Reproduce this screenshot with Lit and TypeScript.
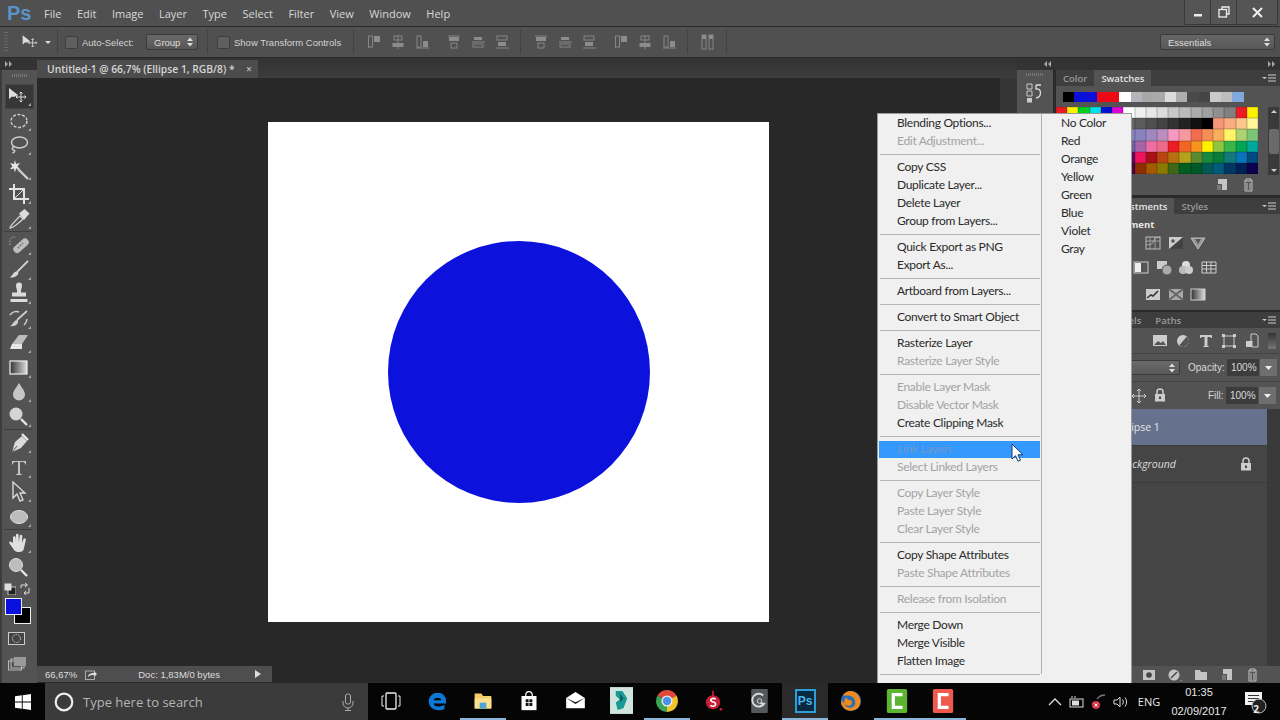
import { LitElement, html, css, svg } from "lit";
import { customElement } from "lit/decorators.js";

const G = "#cfcfcf";
const icon = (w: number, h: number, vb: string, body: unknown, cls = "") =>
  html`<svg class=${cls} width=${w} height=${h} viewBox=${vb} fill="none">${body}</svg>`;

const tri = svg`<path d="M24 19v3h-3z" fill="#a8a8a8"/>`;
const toolBodies: [string, unknown][] = [
  ["move", svg`<path d="M2 4v11l3-2.600 2 .6 4-2z" fill="#ddd"/><path d="M14 8v10M9 13h10M12.500 9.500 14 8l1.500 1.500M12.500 16.500 14 18l1.500-1.500M10.500 11.500 9 13l1.500 1.500M17.500 11.500 19 13l-1.500 1.500" stroke="#ddd"/>`],
  ["marquee", svg`<ellipse cx="12" cy="12" rx="8" ry="6.500" stroke="${G}" stroke-width="1.400" stroke-dasharray="3 1.600"/>`],
  ["lasso", svg`<ellipse cx="12.500" cy="9.500" rx="8" ry="5.500" stroke="${G}" stroke-width="1.400"/><path d="M7 13.500c-2 1-2.500 3-.5 3.500s1.500 2-1 3" stroke="${G}" stroke-width="1.400"/>`],
  ["wand", svg`<path d="M11 11 21 21" stroke="${G}" stroke-width="2.400"/><path d="M8 2l1 4 4-1-2.500 3.200L13 11.500l-4-1-1 4-1.200-4-4 1L5.500 8.200 3 5l4 1z" fill="#e6e6e6"/>`],
  ["crop", svg`<path d="M7 2v15h15M2 7h15v15" stroke="#e2e2e2" stroke-width="2"/><path d="M7 17 17 7" stroke="#e2e2e2"/>`],
  ["dropper", svg`<path d="M3 21c0-2 9-11 10-12l3 3C15 13 6 21.500 3 21z" stroke="${G}" stroke-width="1.300"/><path d="M12 6.500 17.500 2l5 4.500-5.500 6.500z" fill="#dcdcdc"/>`],
  ["heal", svg`<rect x="5" y="9" width="18" height="7.500" rx="3.700" transform="rotate(-42 14 12.700)" fill="#bdbdbd"/><path d="M3 12V7l2-3h4" stroke="#aaa" stroke-dasharray="1.500 1.500"/><path d="M11 15l5-5" stroke="#777" stroke-dasharray="1.500 1.500" stroke-width="2"/>`],
  ["brush", svg`<path d="M10 14 21 3" stroke="${G}" stroke-width="1.800"/><path d="M11 13.500c1.500 3-2 6.500-8.500 6 3-1 3.500-7 8.500-6z" fill="#d8d8d8"/>`],
  ["stamp", svg`<path d="M9 3.500a3 3 0 0 1 6 0c0 3-1.500 4-1 7h5v4H5v-4h5c.5-3-1-4-1-7zM3.500 17h17v3h-17z" fill="#dcdcdc"/>`],
  ["history", svg`<path d="M10 13 20 4" stroke="${G}" stroke-width="1.700"/><path d="M11 13c1 4-3 7-8 6 3-1 3-6 8-6z" fill="#cfcfcf"/><path d="M3 8c3-4 7-4 9-3M20 12c0 2-1 4-3 6" stroke="${G}" stroke-width="1.500"/>`],
  ["eraser", svg`<path d="M12 4h9l-6 9H5z" fill="#bdbdbd"/><path d="M5 13h10v5H3z" fill="#e6e6e6"/>`],
  ["gradient", svg`<rect x="3" y="5" width="17" height="13" fill="url(#tg)" stroke="#eee" stroke-width="1.200"/>`],
  ["drop", svg`<path d="M12 3c3 5 6 8 6 11.500a6 6 0 0 1-12 0C6 11 9 8 12 3z" fill="#c6c6c6"/>`],
  ["dodge", svg`<circle cx="9" cy="9" r="6.500" fill="#d4d4d4"/><path d="M14 14l6 6" stroke="#e6e6e6" stroke-width="2.400"/>`],
  ["pen", svg`<path d="M5 21l3-10 7-6 5 5-6 7z" fill="#dadada"/><path d="M15 3l6 6" stroke="#eee" stroke-width="2.200"/><path d="M5 21l5-6" stroke="#555"/>`],
  ["type", svg`<path d="M5 5h14v3.500h-.8C18 7 17.300 6 15.500 6H13v11.500l1.800.7v.8H9.200v-.8l1.800-.7V6H8.500C6.700 6 6 7 5.800 8.500H5z" fill="#c4c4c4"/>`],
  ["path", svg`<path d="M6 2v16l4-4 3 7 3-1.200-3-6.800h5z" stroke="#d8d8d8" stroke-width="1.400"/>`],
  ["ellipse", svg`<ellipse cx="12" cy="12" rx="8.500" ry="6.500" fill="#bcbcbc" stroke="#ddd"/>`],
  ["hand", svg`<path d="M6 12V6.500a1.300 1.300 0 0 1 2.600 0V11l.4-7a1.300 1.300 0 0 1 2.600 0l.2 7 1-6.500a1.300 1.300 0 0 1 2.500.4L15 12l1.500-4a1.300 1.300 0 0 1 2.400.8L17 17c-.5 3-2 4-5 4-4 0-5-2-7-5l-2.500-3.500c-1-1.500 1-2.500 2-1.500z" fill="#e0e0e0"/>`],
  ["zoom", svg`<circle cx="9" cy="9" r="6.500" fill="#bdbdbd" stroke="#ddd"/><path d="M14 14l6 6" stroke="#e6e6e6" stroke-width="2.400"/>`],
];

const toolGroups = [toolBodies.slice(0, 6), toolBodies.slice(6, 14), toolBodies.slice(14, 18), toolBodies.slice(18)];

const topSwatches = ["#000", "#0a10d8", "#0a10d8", "#ee0a14", "#ee0a14", "#fff", "#b4b4bc", "#a8a8a8", "#aaa", "#dcdcdc", "#aeaeae", "#4a4a4a", "#454545", "#cacaca", "#bebebe", "#80a8dc"];
const swatchRows = [
  ["#e81c24", "#fff200", "#00d020", "#00e0e8", "#0010d0", "#e000d8", "#fff", "#f0f0f0", "#e6e6e6", "#dcdcdc", "#c8c8c8", "#bababa", "#acacac", "#a0a0a0", "#909090", "#808080", "#ed1c24", "#fff200"],
  ["#aaa", "#999", "#888", "#777", "#666", "#666", "#666", "#5c5c5c", "#505050", "#444", "#333", "#222", "#111", "#000", "#f7977a", "#f9ad81", "#fdc68a", "#fff79a"],
  ["#7bcdc8", "#6ecff6", "#7ea7d8", "#8493ca", "#8882be", "#8882be", "#8882be", "#8882be", "#a187be", "#bc8dbf", "#f49ac2", "#f6989d", "#f26c4f", "#f68e55", "#fbaf5c", "#fff467", "#acd372", "#7cc576"],
  ["#1cbbb4", "#00bff3", "#438ccb", "#5574b9", "#5674b9", "#5c6bb5", "#6d5fa8", "#a763a8", "#ee6ea4", "#ed6b88", "#ed1c24", "#f26522", "#f7941d", "#fff200", "#8dc63f", "#39b54a", "#00a651", "#00a99d"],
  ["#00746b", "#0076a3", "#0054a6", "#003471", "#1b1464", "#440e62", "#630460", "#ed145b", "#aa1018", "#b8470f", "#b97010", "#b5a11c", "#5d8a2f", "#198a3c", "#0a7c3a", "#127a7a", "#0a74bb", "#004a80"],
  ["#005952", "#005b7f", "#003663", "#002157", "#0d004c", "#32004b", "#4b0049", "#8e2f02", "#a35a00", "#8a7a00", "#406618", "#005e20", "#005826", "#005952", "#005b7f", "#003663", "#002157", "#0d004c"],
];

type MI = string | [string, string] | null;
const menu: MI[] = [
  "Blending Options...", ["Edit Adjustment...", "d"], null,
  "Copy CSS", "Duplicate Layer...", "Delete Layer", "Group from Layers...", null,
  "Quick Export as PNG", "Export As...", null,
  "Artboard from Layers...", null,
  "Convert to Smart Object", null,
  "Rasterize Layer", ["Rasterize Layer Style", "d"], null,
  ["Enable Layer Mask", "d"], ["Disable Vector Mask", "d"], "Create Clipping Mask", null,
  ["Link Layers", "hl"], ["Select Linked Layers", "d"], null,
  ["Copy Layer Style", "d"], ["Paste Layer Style", "d"], ["Clear Layer Style", "d"], null,
  "Copy Shape Attributes", ["Paste Shape Attributes", "d"], null,
  ["Release from Isolation", "d"], null,
  "Merge Down", "Merge Visible", "Flatten Image", null,
];
const labels = ["No Color", "Red", "Orange", "Yellow", "Green", "Blue", "Violet", "Gray"];
const menus = ["File", "Edit", "Image", "Layer", "Type", "Select", "Filter", "View", "Window", "Help"];

const S = "#858585";
const F = "#8c8c8c";
const alignBodies: unknown[] = [
  svg`<path d="M1.500 2v12" stroke="${S}"/><rect x="1.500" y="2" width="4" height="11" stroke="${S}"/><rect x="7" y="2" width="6" height="6" fill="${F}"/>`,
  svg`<path d="M7 1v14" stroke="${S}"/><rect x="3" y="2" width="8" height="4" stroke="${S}"/><rect x="1.500" y="9" width="11" height="4" fill="${F}"/>`,
  svg`<path d="M1 14h13" stroke="${S}"/><rect x="2" y="2" width="4" height="11" stroke="${S}"/><rect x="8" y="7" width="5" height="6" fill="${F}"/>`,
];
const alignV: unknown[] = [
  svg`<path d="M1 2h12" stroke="${S}"/><rect x="2" y="3" width="10" height="4" fill="${F}"/><rect x="4" y="9" width="6" height="5" stroke="${S}"/>`,
  svg`<path d="M1 8h13" stroke="${S}"/><rect x="3" y="3" width="8" height="3" fill="${F}"/><rect x="2" y="10" width="10" height="3" stroke="${S}"/>`,
  svg`<path d="M1 14h13" stroke="${S}"/><rect x="2" y="2" width="10" height="4" stroke="${S}"/><rect x="3" y="8" width="8" height="4" fill="${F}"/>`,
];

const adj1 = [
  svg`<rect x="1" y="1" width="14" height="12" stroke="#bbb"/><path d="M1 9l6-1 3-6 5-1M5 1v12M10 1v12M1 5h14" stroke="#bbb" stroke-width=".7"/>`,
  svg`<path d="M1 1h14v12H1z" fill="#ccc"/><path d="M15 1v12H1z" fill="#444"/><path d="M3 5h4M5 3v4M10 10h4" stroke="#333"/>`,
  svg`<path d="M1 2h14l-7 11z" fill="#999" stroke="#bbb"/><path d="M5 3h6l-3 5z" fill="#555"/>`,
];
const adj2 = [
  svg`<rect x="1" y="2" width="14" height="11" fill="#555" stroke="#ccc"/><rect x="2" y="3" width="6" height="9" fill="#eee"/>`,
  svg`<rect x="1" y="1" width="10" height="8" fill="#ccc"/><circle cx="11" cy="10" r="5" fill="#aaa" stroke="#555"/>`,
  svg`<circle cx="8" cy="5" r="4" fill="#ddd"/><circle cx="5" cy="10" r="4" fill="#bbb"/><circle cx="11" cy="10" r="4" fill="#ccc"/>`,
  svg`<path d="M1 2h14v11H1zM1 5.500h14M1 9h14M5.500 2v11M10 2v11" stroke="#ccc"/>`,
];
const adj3 = [
  svg`<rect x="1" y="2" width="14" height="11" fill="#ccc"/><path d="M2 11l4-3 2 1 5-5" stroke="#333" stroke-width="1.500"/>`,
  svg`<rect x="1" y="2" width="14" height="11" fill="#aaa"/><path d="M1 2l14 11M15 2 1 13" stroke="#666" stroke-width="2"/>`,
  svg`<rect x="1" y="2" width="14" height="11" fill="url(#tg)" stroke="#ccc"/>`,
];
const layerIcons = [
  svg`<rect x="1" y="2" width="14" height="11" fill="#ccc"/><path d="M2 12l4-4 3 2 2-2 3 4z" fill="#555"/>`,
  svg`<circle cx="8" cy="8" r="6" fill="#ccc"/><path d="M8 2a6 6 0 0 1 0 12z" fill="#555" transform="rotate(40 8 8)"/>`,
  svg`<path d="M2 2h12v3h-1l-1-1H9.500v9l1.500.5v.5H5v-.5l1.500-.5V4H4L3 5H2z" fill="#ccc"/>`,
  svg`<path d="M3 3h10v10H3z" stroke="#ccc"/><path d="M1 1h3v3H1zM12 1h3v3h-3zM1 12h3v3H1zM12 12h3v3h-3z" fill="#ccc"/>`,
  svg`<path d="M7 1h5l2 2v11H8V8H7z" stroke="#ccc"/><rect x="2" y="8" width="6" height="6" fill="#ccc"/>`,
];

const bottomIcons = [
  svg`<rect x="2" y="3" width="12" height="10" fill="#c4c4c4"/><circle cx="8" cy="8" r="2.800" fill="#444"/>`,
  svg`<circle cx="7" cy="8" r="5.500" fill="#c4c4c4"/><path d="M4 11l6-6" stroke="#444" stroke-width="1.500"/><path d="M13 13h2l-1 1z" fill="#bbb"/>`,
  svg`<path d="M2 3h5l1 2h6v8H2z" fill="#c4c4c4"/>`,
  svg`<path d="M4 2h9v11H8V7H4z" fill="#c4c4c4"/><path d="M3 8h4v5H3z" fill="#777"/>`,
  svg`<path d="M5 4V2h5v2M3 4h9M4 5v9h7V5M6 6v7M9 6v7" stroke="#c4c4c4"/>`,
];
const lockI = (c: string) => icon(12, 14, "0 0 12 14", svg`<path d="M3 6V4a3 3 0 0 1 6 0v2" stroke="${c}" stroke-width="1.500"/><rect x="1" y="6" width="10" height="7.500" fill="${c}"/><rect x="5" y="8.500" width="2" height="2.500" fill="#444"/>`);
const panelMenu = icon(14, 8, "0 0 14 8", svg`<path d="M0 3l2.500 2L5 3z" fill="#ccc"/><path d="M6 1h8M6 4h8M6 7h8" stroke="#ccc"/>`, "pm");
const arrows = icon(6, 10, "0 0 6 10", svg`<path d="M0 4l3-3.500L6 4zM0 6l3 3.500L6 6z" fill="#ddd"/>`);

const taskApps: [unknown, string?][] = [
  [icon(22, 22, "0 0 22 22", svg`<rect x="6" y="3" width="10" height="16" rx="1" stroke="#eee" stroke-width="1.300"/><path d="M4 6H2v10h2M18 6h2v10h-2" stroke="#eee"/>`)],
  [icon(20, 22, "0 0 24 24", svg`<path d="M2 13C2 6 7 2 13 2c6 0 10 4 10 11v2H8c.5 4 7 5 13 1.500v5C14 25 3 23 2 13zm6-2h9c-.3-3.500-7.500-4-9 0z" fill="#0a78d4"/>`)],
  [icon(20, 20, "0 0 24 24", svg`<path d="M2 3h8l2 3h10v15H2z" fill="#f5cf6b"/><path d="M2 9h20v12H2z" fill="#fbe08e"/><path d="M8 14h8v7H8z" fill="#4aa6d8"/>`), "on"],
  [icon(20, 22, "0 0 24 26", svg`<path d="M3 7h18v17H3z" fill="#fff"/><path d="M8 7c0-7 8-7 8 0" stroke="#fff" stroke-width="1.500"/><path d="M8 11h3.500v3.500H8zM12.500 11H16v3.500h-3.500zM8 15.500h3.500V19H8zM12.500 15.500H16V19h-3.500z" fill="#111"/>`)],
  [icon(23, 17, "0 0 24 20", svg`<path d="M1 7 12 0l11 7v12H1z" fill="#fff"/><path d="M1 7l11 7 11-7-11 5z" fill="#111"/>`)],
  [icon(23, 27, "0 0 24 28", svg`<rect width="24" height="28" fill="#cfe6e0"/><path d="M6 4h7l5 8-4 10-6 2-2-8 4-3-4-4z" fill="#1b9a94"/><path d="M10 6l4 6-3 4z" fill="#0d5d5a"/>`)],
  [icon(22, 22, "0 0 22 22", svg`<path d="M11 11 1.500 5.500A11 11 0 0 1 20.500 5.500z" fill="#e04a3c"/><path d="M11 11 20.500 5.500A11 11 0 0 1 11 22z" fill="#f2c22d"/><path d="M11 11V22A11 11 0 0 1 1.500 5.500z" fill="#3aa655"/><circle cx="11" cy="11" r="5.500" fill="#eee"/><circle cx="11" cy="11" r="4.200" fill="#4b8fe8"/>`), "on"],
  [icon(20, 23, "0 0 22 26", svg`<circle cx="11" cy="15" r="8" fill="#c81e36"/><path d="M11 2v6" stroke="#c81e36" stroke-width="2"/><path d="M14 11.500c-2-1.500-6-1-5.500 1.500s5.500 1 5.500 4-4 3-6 1.500" stroke="#fff" stroke-width="1.800"/><circle cx="20" cy="23" r="1.500" fill="#c81e36"/>`)],
  [icon(17, 24, "0 0 18 26", svg`<rect width="18" height="26" rx="1" fill="#55595c"/><path d="M13 7a7 7 0 1 0 1 9l-4-.5" stroke="#ddd" stroke-width="2"/><circle cx="9" cy="13" r="2.500" stroke="#ddd"/>`)],
  [html`<span class="psapp">Ps</span>`, "on active"],
  [icon(22, 22, "0 0 24 24", svg`<circle cx="12" cy="12" r="11" fill="#2a6fb8"/><path d="M3 6c4-6 10-6 14-3 6 4 7 13 2 17-5 4-13 4-17-3-1-2-1-5 0-7 0 3 2 4 3 4-1-3 1-5 3-6-1 2 0 3 2 3 3 0 4 3 2 5-2 2-6 1-7-1 1 4 6 6 10 3 3-3 2-8-2-11-2-1-4-1-6-1z" fill="#f08a1d"/>`)],
  [icon(22, 24, "0 0 22 26", svg`<rect width="22" height="26" rx="2" fill="#5cb531"/><path d="M17 6H7v14h10" stroke="#fff" stroke-width="3.500"/>`), "on"],
  [icon(22, 24, "0 0 22 26", svg`<rect width="22" height="26" rx="2" fill="#ee5a4d"/><path d="M17 6H7v14h10" stroke="#fff" stroke-width="3.500"/>`), "on"],
];

@customElement("app-root")
export class AppRoot extends LitElement {
  static styles = css`
    :host { display: block; width: 1280px; height: 720px; position: relative; overflow: hidden; background: #000;
      font: 9.500px "Liberation Sans", "Noto Sans", sans-serif; color: #d4d4d4; }
    .defs { position: absolute; }
    .app { display: flex; flex-direction: column; height: 720px; }
    .menubar { height: 27px; flex: none; display: flex; align-items: center; background: #505050; border-bottom: 1px solid #2c2c2c; box-sizing: border-box; position: relative; }
    .logo { font: bold 20px "Liberation Sans", sans-serif; color: #5b93c9; margin-left: 7px; width: 37px; }
    .menus { display: flex; gap: 15.500px; font: 11px "Open Sans", sans-serif; color: #d8d8d8; }
    .winctl { position: absolute; right: 2px; top: 0; height: 25px; width: 94px; display: flex; background: #555; border: 1px solid #3a3a3a; border-top: 0; box-sizing: border-box; border-radius: 0 0 2px 2px; }
    .winctl span { display: flex; align-items: center; justify-content: center; border-right: 1px solid #3a3a3a; }
    .winctl span:nth-child(1), .winctl span:nth-child(2) { width: 25px; }
    .winctl span:nth-child(3) { flex: 1; border: 0; }
    .options { height: 31px; flex: none; display: flex; align-items: center; background: #505050; border-bottom: 1px solid #2a2a2a; box-sizing: border-box; }
    .grip { width: 4px; height: 20px; margin-left: 4px; background: repeating-linear-gradient(#6a6a6a 0 1px, transparent 1px 3px); }
    .mv { margin-left: 13px; }
    .caret { width: 0; height: 0; border: 3px solid transparent; border-top: 3px solid #ddd; margin: 3px 0 0 4px; }
    .osep { width: 1px; height: 24px; background: #424242; }
    .s1 { margin-left: 6px; }
    .cb { width: 13px; height: 13px; background: #5f5f5f; border: 1px solid #3e3e3e; box-sizing: border-box; border-radius: 1px; }
    .c1 { margin-left: 7px; } .l1 { margin-left: 4px; width: 64px; white-space: nowrap; }
    .select { width: 52px; height: 16px; box-sizing: border-box; display: flex; align-items: center; justify-content: space-between; padding: 0 4px 0 7px; background: linear-gradient(#6a6a6a, #565656); border: 1px solid #3a3a3a; border-radius: 2px; color: #ddd; }
    .s2 { margin-left: 9px; } .c2 { margin-left: 9px; } .l2 { margin-left: 4px; width: 119px; white-space: nowrap; }
    .aligns { margin-left: 13px; display: flex; align-items: center; }
    .ag { display: flex; gap: 10px; }
    .ag + .ag { margin-left: 18px; }
    .osep.m { margin: 0 13px 0 11px; }
    .ess { margin-left: auto; margin-right: 5px; width: 115px; height: 16px; box-sizing: border-box; display: flex; align-items: center; justify-content: space-between; padding: 0 4px 0 7px; background: linear-gradient(#666, #585858); border: 1px solid #3a3a3a; border-radius: 2px; font-size: 9.500px; color: #ddd; }

    .main { flex: 1; min-height: 0; display: flex; background: #2a2a2a; }
    .tools { width: 37px; flex: none; display: flex; flex-direction: column; background: #535353; border-left: 2px solid #3c3c3c; box-sizing: border-box; margin-left: 0; }
    .strip { height: 12px; background: #333; flex: none; display: flex; align-items: center; box-sizing: border-box; }
    .tools .strip { margin-left: -2px; padding-left: 5px; }
    .rule { height: 3px; margin: 4px 10px 7px; background: repeating-linear-gradient(90deg, #777 0 1px, transparent 1px 2px); flex: none; }
    .tool { height: 24.500px; flex: none; display: flex; align-items: center; justify-content: center; margin-left: -2px; }
    .tool.sel { background: #373737; margin: 0 3px 0 3px; height: 22px; padding: 1.250px 0; border-radius: 2px; box-shadow: inset 0 0 0 1px #444; }
    .tool.sel svg { margin-left: -2px; }
    .tsep { height: 1px; margin: 0 4px 1px 2px; background: #3e3e3e; flex: none; }
    .swaps { height: 17px; display: flex; justify-content: space-between; align-items: center; padding: 0 6px 0 2px; flex: none; }
    .colors { display: grid; margin: 1px 0 0 3px; flex: none; }
    .fg, .bg { grid-area: 1 / 1; width: 17px; height: 17px; box-sizing: border-box; border: 1px solid #eee; }
    .fg { background: #0a10e0; z-index: 1; }
    .bg { background: #000; margin: 9px 0 0 9px; }
    .mask { margin: 8px 0 0 6px; flex: none; }
    .screen { margin: 9px 0 0 6px; flex: none; }

    .doc { flex: 1; min-width: 0; display: flex; flex-direction: column; background: #282828; }
    .tabbar { height: 20px; flex: none; padding-top: 2px; box-sizing: border-box; background: linear-gradient(#333, #3c3c3c); display: flex; }
    .tab { width: 221px; box-sizing: border-box; background: #4c4c4c; display: flex; align-items: center; justify-content: space-between; padding: 0 6px 0 10px; color: #d6d6d6; white-space: nowrap; font: 600 10.300px "Open Sans", sans-serif; }
    .tab i { font-style: normal; color: #bbb; }
    .work { flex: 1; min-height: 0; display: flex; }
    .canvasarea { flex: 1; display: flex; align-items: center; justify-content: center; }
    .canvas { width: 501px; height: 500px; background: #fff; display: flex; align-items: center; justify-content: center; }
    .circle { width: 262px; height: 262px; border-radius: 50%; background: #0c12dc; }
    .vs { width: 17px; flex: none; background: #353535; }
    .status { height: 16px; flex: none; display: flex; margin-bottom: 1px; }
    .stbox { width: 235px; background: #4e4e4e; display: flex; align-items: center; padding-left: 8px; box-sizing: border-box; white-space: nowrap; color: #ddd; font-size: 9.500px; }
    .stbox svg { margin-left: 8px; }
    .stbox .docsz { margin-left: 41px; width: 117px; }
    .play { width: 0; height: 0; border: 4px solid transparent; border-left: 6px solid #ddd; border-right: 0; }

    .dock { width: 39px; flex: none; display: flex; flex-direction: column; background: #2a2a2a; }
    .dock .body { margin-right: 3px; background: #535353; flex: 1; display: flex; flex-direction: column; align-items: center; }
    .dock .rule { margin: 3px 9px 7px; align-self: stretch; }
    .dock .strip { justify-content: flex-end; padding-right: 4px; }
    .panels { width: 224px; flex: none; display: flex; flex-direction: column; background: #2a2a2a; }
    .panels .strip { justify-content: flex-end; padding-right: 4px; }
    .panel { background: #535353; flex: none; display: flex; flex-direction: column; }
    .p1 { height: 125px; } .p2 { height: 112px; margin-top: 3px; }
    .p3 { flex: 1; margin-top: 2px; min-height: 0; }
    .tabs { height: 16px; flex: none; display: flex; background: #3e3e3e; position: relative; font: 600 9.500px "Open Sans", sans-serif; color: #999; }
    .tabs span { padding: 0 7px; display: flex; align-items: center; }
    .tabs span.on { background: #535353; color: #e4e4e4; }
    .p3 .tabs span:first-child, .p2 .tabs span:first-child { padding: 0 3px; }
    .pm { position: absolute; right: 4px; top: 4px; }
    .tops { display: flex; margin: 6px 0 0 7px; height: 10px; flex: none; }
    .tops i { width: 11.300px; }
    .swgrid { display: flex; margin-top: 5px; flex: none; }
    .rows { width: 202px; }
    .row { display: flex; height: 11.200px; }
    .row i { flex: 1; box-shadow: inset 0 0 0 .5px rgba(0,0,0,.25); }
    .scroll { width: 11px; margin-left: 10px; height: 68px; background: #3a3a3a; display: flex; flex-direction: column; align-items: center; justify-content: space-between; padding: 3px 0; box-sizing: border-box; }
    .scroll b { width: 10px; height: 25px; background: #6a6a6a; border-radius: 2px; }
    .tinyup { width: 0; height: 0; border: 3px solid transparent; border-bottom-color: #ccc; border-top: 0; }
    .tinydn { width: 0; height: 0; border: 3px solid transparent; border-top-color: #ccc; border-bottom: 0; }
    .pfoot { flex: 1; display: flex; align-items: center; padding-left: 158px; gap: 11px; }
    .hd { color: #e6e6e6; font: 700 9.600px "Open Sans", sans-serif; padding: 4px 0 0 7px; height: 12px; white-space: nowrap; }
    .airow { display: flex; height: 25.500px; align-items: center; gap: 6.700px; flex: none; }
    .a1 { padding-left: 89px; } .a2 { padding-left: 77px; } .a3 { padding-left: 89px; }
    .filter { height: 26px; flex: none; display: flex; align-items: center; padding-left: 96px; gap: 7px; border-bottom: 1px solid #444; box-sizing: border-box; }
    .filter .toggle { width: 8px; height: 16px; margin-left: 1px; background: linear-gradient(#333, #777); }
    .blend { height: 28px; flex: none; display: flex; align-items: center; border-bottom: 1px solid #444; box-sizing: border-box; }
    .bsel { width: 124px; height: 15px; background: linear-gradient(#6a6a6a, #595959); border: 1px solid #3a3a3a; border-radius: 2px; box-sizing: border-box; display: flex; align-items: center; justify-content: flex-end; padding-right: 4px; }
    .lbl { margin-left: 8px; width: 39px; white-space: nowrap; font-size: 10px; color: #d8d8d8; }
    .num { width: 32px; height: 17px; background: #3c3c3c; display: flex; align-items: center; padding-left: 4px; box-sizing: border-box; color: #ddd; font-size: 10px; }
    .nb { width: 17px; height: 17px; background: #6e6e6e; display: flex; align-items: center; justify-content: center; margin-left: 1px; }
    .lock { height: 27px; flex: none; display: flex; align-items: center; padding-left: 75px; }
    .lock .sp { margin-left: 7px; }
    .lock .lbl { margin-left: auto; width: 18px; margin-right: 0; }
    .lock .tail { margin-right: 4px; }
    .list { flex: 1; min-height: 0; display: flex; background: #3a3a3a; }
    .lcol { flex: 1; background: #454545; }
    .lrow { height: 36px; display: flex; align-items: center; padding-left: 64px; border-bottom: 1px solid #3a3a3a; color: #e4e4e4; font: 10.500px "Open Sans", sans-serif; }
    .lrow.sel { background: #66718e; }
    .lrow em { width: 120px; color: #ddd; }
    .lscroll { width: 13px; flex: none; background: #3a3a3a; }
    .pbar { height: 17px; flex: none; display: flex; align-items: center; padding-left: 85px; gap: 10px; background: #535353; }

    .taskbar { height: 37px; flex: none; background: #050505; display: flex; align-items: stretch; color: #e8e8e8; font-family: "Open Sans", sans-serif; }
    .start { width: 45px; display: flex; align-items: center; justify-content: center; }
    .search { width: 323px; background: #3b3b3b; display: flex; align-items: center; padding-left: 9px; box-sizing: border-box; color: #b4b4b4; font-size: 13px; }
    .search .ph { margin-left: 9px; flex: 1; }
    .search .mic { margin-right: 14px; display: flex; }
    .app-btn { width: 46px; display: flex; align-items: center; justify-content: center; box-sizing: border-box; border-bottom: 2px solid transparent; }
    .app-btn.on { border-bottom-color: #8ab4d8; }
    .app-btn.active { background: #2a2a2a; }
    .psapp { width: 21px; height: 24px; border: 2px solid #2f9ed8; box-sizing: border-box; background: #072a40; color: #49b4ea; display: flex; align-items: center; justify-content: center; font: 700 12px "Liberation Sans", sans-serif; }
    .tray { margin-left: auto; display: flex; align-items: center; }
    .tray > span { display: flex; align-items: center; justify-content: center; width: 22px; }
    .tray .eng { width: 34px; font-size: 11px; }
    .tray .clock { width: 66px; flex-direction: column; font: 11px/19px "Liberation Sans", sans-serif; white-space: nowrap; }
    .tray .notif { width: 48px; position: relative; }
    .badge { position: absolute; left: 17px; top: 12px; width: 14px; text-align: center; font: 700 10px "Open Sans", sans-serif; color: #eee; line-height: 14px; }

    .ctx { position: absolute; left: 877px; top: 113px; width: 255px; height: 570px; background: #f0f0f0; border: 1px solid #999; border-bottom: 0; box-sizing: border-box; display: flex; font: 12px "Lato", "Open Sans", sans-serif; letter-spacing: -.3px; color: #2a2a2a; z-index: 5; }
    .cl { width: 161px; flex: none; padding-left: 1px; }
    .it { height: 18px; line-height: 18px; padding-left: 18px; white-space: nowrap; }
    .it.d { color: #a3a3a3; }
    .it.hl { background: #3399ff; color: #6f97c4; height: 17px; margin-top: 1px; line-height: 16px; }
    .sp8 { height: 8px; display: flex; align-items: center; margin-left: 1px; }
    .sp8::before { content: ""; flex: 1; height: 1px; background: #b4b4b4; }
    .cr { border-left: 1px solid #b0b0b0; flex: 1; height: 560px; margin-left: 1px; }
    .cr div { height: 18px; line-height: 18px; padding-left: 19px; }
    .cursor { position: absolute; left: 1011px; top: 443px; z-index: 6; }
  `;

  render() {
    return html`
      <svg width="0" height="0" class="defs"><defs><linearGradient id="tg"><stop offset="0" stop-color="#333"/><stop offset="1" stop-color="#ddd"/></linearGradient></defs></svg>
      <div class="app">
        <div class="menubar">
          <div class="logo">Ps</div>
          <div class="menus">${menus.map((m) => html`<span>${m}</span>`)}</div>
          <div class="winctl">
            <span>${icon(10, 10, "0 0 10 10", svg`<rect x="1" y="7" width="8" height="2.500" fill="#eee"/>`)}</span>
            <span>${icon(12, 12, "0 0 12 12", svg`<path d="M4 3V1h7v7H9" stroke="#eee" stroke-width="1.300"/><rect x="1" y="3.500" width="7.500" height="7.500" stroke="#eee" stroke-width="1.300"/>`)}</span>
            <span>${icon(11, 11, "0 0 11 11", svg`<path d="M1 1l9 9M10 1l-9 9" stroke="#eee" stroke-width="2"/>`)}</span>
          </div>
        </div>
        <div class="options">
          <div class="grip"></div>
          <svg class="mv" width="20" height="20" viewBox="0 0 24 24" fill="none">${toolBodies[0][1]}</svg>
          <div class="caret"></div>
          <div class="osep s1"></div>
          <div class="cb c1"></div><span class="l1">Auto-Select:</span>
          <div class="select"><span>Group</span>${arrows}</div>
          <div class="osep s2"></div>
          <div class="cb c2"></div><span class="l2">Show Transform Controls</span>
          <div class="osep"></div>
          <div class="aligns">
            <div class="ag">${alignBodies.map((b) => icon(14, 16, "0 0 14 16", b))}</div>
            <div class="ag">${alignV.map((b) => icon(14, 16, "0 0 14 16", b))}</div>
            <div class="osep m"></div>
            <div class="ag">${alignV.map((b) => icon(14, 16, "0 0 14 16", b))}</div>
            <div class="ag">${alignBodies.map((b) => icon(14, 16, "0 0 14 16", b))}</div>
            <div class="osep m"></div>
            ${icon(14, 16, "0 0 14 16", svg`<rect x="1" y="1" width="4" height="14" stroke="${S}"/><rect x="8" y="1" width="4" height="14" stroke="${S}"/><rect x="1" y="1" width="4" height="4" fill="${F}"/><rect x="8" y="1" width="4" height="4" fill="${F}"/>`)}
            <div class="osep m"></div>
          </div>
          <div class="ess"><span>Essentials</span>${arrows}</div>
        </div>
        <div class="main">
          <div class="tools">
            <div class="strip">${icon(8, 6, "0 0 8 6", svg`<path d="M0 0l3 3-3 3zM4 0l3 3-3 3z" fill="#aaa"/>`)}</div>
            <div class="rule"></div>
            ${toolGroups.map((g, gi) => html`
              ${gi ? html`<div class="tsep"></div>` : ""}
              ${g.map(([name, body]) => html`<div class=${name === "move" ? "tool sel" : "tool"}>${icon(24, 24, "0 0 24 24", svg`${body}${name === "zoom" ? "" : tri}`)}</div>`)}
            `)}
            <div class="swaps">
              ${icon(12, 12, "0 0 12 12", svg`<rect x="4" y="4" width="8" height="8" fill="#222" stroke="#ccc"/><rect x="0.500" y="0.500" width="7" height="7" fill="#ddd"/>`)}
              ${icon(12, 12, "0 0 12 12", svg`<path d="M2 5V2h6M6 0l2.500 2L6 4M10 5v5H5M7 8l-2 2 2 2" stroke="#ddd"/>`)}
            </div>
            <div class="colors"><div class="fg"></div><div class="bg"></div></div>
            <div class="mask">${icon(18, 14, "0 0 18 14", svg`<rect x="0.500" y="0.500" width="16" height="12" fill="#444" stroke="#ccc"/><circle cx="8.500" cy="6.500" r="4" stroke="#ccc" stroke-dasharray="1.500 1"/>`)}</div>
            <div class="screen">${icon(20, 14, "0 0 20 14", svg`<rect x="0.500" y="4" width="13" height="9" stroke="#bbb"/><rect x="3" y="2" width="13" height="9" stroke="#bbb"/><rect x="6" y="0" width="12" height="9" fill="#999"/>`)}</div>
          </div>
          <div class="doc">
            <div class="tabbar"><div class="tab"><span>Untitled-1 @ 66,7% (Ellipse 1, RGB/8) *</span><i>×</i></div></div>
            <div class="work">
              <div class="canvasarea"><div class="canvas"><div class="circle"></div></div></div>
              <div class="vs"></div>
            </div>
            <div class="status">
              <div class="stbox">
                <span>66,67%</span>
                ${icon(12, 11, "0 0 12 11", svg`<rect x="0.500" y="2" width="9" height="8.500" stroke="#aaa"/><path d="M3 8c0-3 3-4 6-4V2l3 3-3 3V6C7 6 5 6 3 8z" fill="#ddd"/>`)}
                <span class="docsz" >Doc: 1,83M/0 bytes</span>
                <span class="play"></span>
              </div>
            </div>
          </div>
          <div class="dock">
            <div class="strip">${icon(8, 6, "0 0 8 6", svg`<path d="M3 0 0 3l3 3zM7 0 4 3l3 3z" fill="#aaa"/>`)}</div>
            <div class="body">
              <div class="rule"></div>
              ${icon(18, 20, "0 0 18 20", svg`<path d="M1 1h5v5H1zM1 8h5v5H1z" stroke="#ccc"/><rect x="1" y="15" width="5" height="4.500" fill="#ccc"/><path d="M10 2h5M10 2v4c6-1 6 8 0 9" stroke="#ddd" stroke-width="1.300"/>`)}
            </div>
          </div>
          <div class="panels">
            <div class="strip">${icon(8, 6, "0 0 8 6", svg`<path d="M0 0l3 3-3 3zM4 0l3 3-3 3z" fill="#aaa"/>`)}</div>
            <div class="panel p1">
              <div class="tabs"><span>Color</span><span class="on">Swatches</span>${panelMenu}</div>
              <div class="tops">${topSwatches.map((c) => html`<i style="background:${c}"></i>`)}</div>
              <div class="swgrid">
                <div class="rows">${swatchRows.map((r) => html`<div class="row">${r.map((c) => html`<i style="background:${c}"></i>`)}</div>`)}</div>
                <div class="scroll"><span class="tinyup"></span><b></b><span class="tinydn"></span></div>
              </div>
              <div class="pfoot">${icon(16, 16, "0 0 16 16", bottomIcons[3])}${icon(16, 16, "0 0 16 16", bottomIcons[4])}</div>
            </div>
            <div class="panel p2">
              <div class="tabs"><span>Libraries</span><span class="on">Adjustments</span><span>Styles</span>${panelMenu}</div>
              <div class="hd">Add an adjustment</div>
              <div class="airow a1">${adj1.map((b) => icon(16, 14, "0 0 16 14", b))}</div>
              <div class="airow a2">${adj2.map((b) => icon(16, 16, "0 0 16 16", b))}</div>
              <div class="airow a3">${adj3.map((b) => icon(16, 14, "0 0 16 14", b))}</div>
            </div>
            <div class="panel p3">
              <div class="tabs"><span class="on">Layers</span><span>Channels</span><span>Paths</span>${panelMenu}</div>
              <div class="filter">
                ${layerIcons.map((b) => icon(16, 16, "0 0 16 16", b))}
                <span class="toggle"></span>
              </div>
              <div class="blend">
                <div class="bsel">${arrows}</div>
                <span class="lbl">Opacity:</span><span class="num">100%</span>
                <span class="nb">${icon(7, 4, "0 0 7 4", svg`<path d="M0 0h7L3.500 4z" fill="#eee"/>`)}</span>
              </div>
              <div class="lock">
                ${icon(16, 16, "0 0 16 16", svg`<path d="M8 1v14M1 8h14M6 3l2-2 2 2M6 13l2 2 2-2M3 6 1 8l2 2M13 6l2 2-2 2" stroke="#ccc"/>`)}
                <span class="sp">${lockI("#ccc")}</span>
                <span class="lbl">Fill:</span><span class="num">100%</span>
                <span class="nb tail">${icon(7, 4, "0 0 7 4", svg`<path d="M0 0h7L3.500 4z" fill="#eee"/>`)}</span>
              </div>
              <div class="list">
                <div class="lcol">
                  <div class="lrow sel">Ellipse 1</div>
                  <div class="lrow"><em>Background</em>${lockI("#ccc")}</div>
                </div>
                <div class="lscroll"></div>
              </div>
              <div class="pbar">${bottomIcons.map((b) => icon(16, 16, "0 0 16 16", b))}</div>
            </div>
          </div>
        </div>
        <div class="taskbar">
          <div class="start">${icon(16, 16, "0 0 16 16", svg`<path d="M0 2.300 6.800 1.300v6.200H0zM7.700 1.200 16 0v7.500H7.700zM0 8.400h6.800v6.300L0 13.700zM7.700 8.400H16V16l-8.300-1.200z" fill="#fff"/>`)}</div>
          <div class="search">
            ${icon(20, 20, "0 0 20 20", svg`<circle cx="10" cy="10" r="8.300" stroke="#eee" stroke-width="2.200"/>`)}
            <span class="ph">Type here to search</span>
            <span class="mic">${icon(12, 18, "0 0 12 18", svg`<rect x="3.500" y="1" width="5" height="10" rx="2" stroke="#aaa"/><path d="M1 8v2a5 5 0 0 0 10 0V8M6 15v3M3 17.500h6" stroke="#aaa"/>`)}</span>
          </div>
          ${taskApps.map(([ic, c]) => html`<div class="app-btn ${c ?? ""}">${ic}</div>`)}
          <div class="tray">
            <span>${icon(14, 8, "0 0 14 8", svg`<path d="M1 7l6-6 6 6" stroke="#ddd" stroke-width="1.300"/>`)}</span>
            <span>${icon(16, 14, "0 0 16 14", svg`<rect x="1" y="4" width="13" height="8" stroke="#ddd"/><rect x="3" y="5.500" width="7" height="5" fill="#ddd"/><path d="M3 3V1M6 3V1" stroke="#ddd"/>`)}</span>
            <span>${icon(16, 16, "0 0 16 16", svg`<path d="M1 10l2-2M3 13a8 8 0 0 1 4-4M6 5a10 10 0 0 1 8-4" stroke="#777" stroke-width="1.300"/><circle cx="5" cy="11" r="4" fill="#d8344a"/><path d="M3.500 9.500l3 3M6.500 9.500l-3 3" stroke="#fff"/>`)}</span>
            <span>${icon(16, 14, "0 0 16 14", svg`<path d="M1 5h3l3-3v10L4 9H1z" stroke="#ddd"/><path d="M9.500 4.500a4 4 0 0 1 0 5M12 2.500a7 7 0 0 1 0 9" stroke="#ddd"/>`)}</span>
            <span class="eng">ENG</span>
            <span class="clock"><span>01:35</span><span>02/09/2017</span></span>
            <span class="notif">${icon(24, 24, "0 0 24 24", svg`<path d="M1 2h17v13h-6l-4 4v-4H1z" fill="#f2f2f2"/><path d="M4 5.500h11M4 8.500h11M4 11.500h7" stroke="#333"/><circle cx="15" cy="16" r="7" fill="#222" stroke="#bbb"/>`)}<b class="badge">2</b></span>
          </div>
        </div>
      </div>
      <div class="ctx">
        <div class="cl">
          ${menu.map((m) => {
            if (m === null) return html`<div class="sp8"></div>`;
            if (typeof m === "string") return html`<div class="it">${m}</div>`;
            return html`<div class="it ${m[1]}">${m[0]}</div>`;
          })}
        </div>
        <div class="cr">${labels.map((l) => html`<div>${l}</div>`)}</div>
      </div>
      <svg class="cursor" width="13" height="19" viewBox="0 0 13 19"><path d="M1 1v15l3.500-3.300 2.500 5.500 2.500-1-2.500-5.400H12z" fill="#fff" stroke="#123a6a"/></svg>
    `;
  }
}
